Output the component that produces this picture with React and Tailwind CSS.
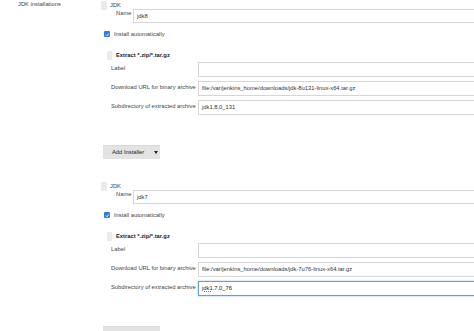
import React from "react";

function Field({ label, value, focused }) {
  return (
    <div className="flex items-start h-[15px] ml-[10px]">
      <span className="w-[87px] shrink-0 pt-[3px] leading-[7px]">{label}</span>
      <div
        className={
          focused
            ? "w-[330px] h-[15px] shrink-0 border border-[#5d9fe0] shadow-[0_0_2px_#9cc7f0] bg-white flex items-center pl-[3px] text-[#222]"
            : "w-[330px] h-[15px] shrink-0 border border-[#d6d6d6] bg-white flex items-center pl-[3px] text-[#333]"
        }
      >
        {value}
      </div>
    </div>
  );
}

function Section({ name, url, subdir, focusSubdir, buttonLabel }) {
  return (
    <div className="flex flex-col h-[181px] shrink-0">
      <div className="flex items-center h-[9px] mt-[1px]">
        <div className="w-[6px] h-[9px] bg-[#ebebeb]" />
        <span className="ml-[3px] leading-[7px]">JDK</span>
      </div>
      <div className="flex items-start h-[14px] mt-[-1px] ml-[15px]">
        <span className="w-[17px] shrink-0 pt-[1px] leading-[7px]">Name</span>
        <div className="w-[400px] h-[14px] shrink-0 border border-[#d6d6d6] bg-white flex items-center pl-[3px] text-[#333]">
          {name}
        </div>
      </div>
      <div className="flex items-center h-[6px] mt-[8px] ml-[3px]">
        <div className="w-[6px] h-[6px] rounded-[1px] bg-[#2f7de1] flex items-center justify-center">
          <svg width="5" height="5" viewBox="0 0 10 10">
            <path d="M2 5.2 L4.2 7.4 L8 2.8" fill="none" stroke="white" strokeWidth="1.8" />
          </svg>
        </div>
        <span className="ml-[4px] leading-[7px]">Install automatically</span>
      </div>
      <div className="flex items-center h-[9px] mt-[14px] ml-[6px]">
        <div className="w-[5px] h-[9px] bg-[#ebebeb]" />
        <span className="ml-[4px] leading-[7px] font-bold text-[#222]">Extract *.zip/*.tar.gz</span>
      </div>
      <div className="mt-[2px]">
        <Field label="Label" value="" />
      </div>
      <div className="mt-[4px]">
        <Field label="Download URL for binary archive" value={url} />
      </div>
      <div className="mt-[4px]">
        <Field
          label="Subdirectory of extracted archive"
          value={
            focusSubdir ? (
              <span>
                <span className="underline decoration-dotted decoration-[#e04040]">jdk1</span>
                {subdir.slice(4)}
              </span>
            ) : (
              subdir
            )
          }
          focused={focusSubdir}
        />
      </div>
      <div className="mt-[30px] ml-[2px] w-[57px] h-[14px] bg-[#e3e3e3] border-t border-[#d9d9d9] flex items-center pl-[9px] text-[#222]">
        {buttonLabel && (
          <>
            <span className="leading-[7px]">{buttonLabel}</span>
            <svg className="ml-[10px]" width="4" height="3" viewBox="0 0 4 3">
              <path d="M0 0 L4 0 L2 3 Z" fill="#222" />
            </svg>
          </>
        )}
      </div>
    </div>
  );
}

export default function App() {
  return (
    <div
      className="w-[474px] h-[331px] overflow-hidden bg-white flex text-[5.8px] text-[#444]"
      style={{ fontFamily: '"Liberation Sans", Arial, sans-serif' }}
    >
      <div className="w-[101px] shrink-0 pl-[18px] pt-[1px] leading-[7px]">JDK installations</div>
      <div className="flex flex-col shrink-0 w-[440px]">
        <Section
          name="jdk8"
          url="file:/var/jenkins_home/downloads/jdk-8u131-linux-x64.tar.gz"
          subdir="jdk1.8.0_131"
          buttonLabel="Add Installer"
        />
        <Section
          name="jdk7"
          url="file:/var/jenkins_home/downloads/jdk-7u76-linux-x64.tar.gz"
          subdir="jdk1.7.0_76"
          focusSubdir
        />
      </div>
    </div>
  );
}
